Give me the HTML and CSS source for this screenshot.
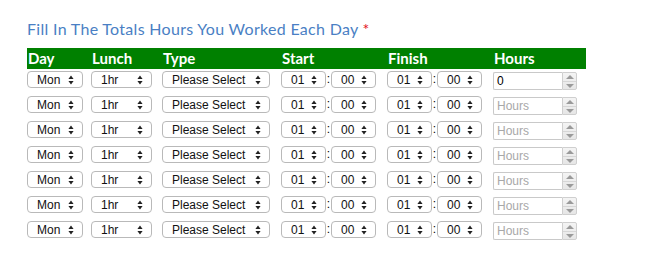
FILE: index.html
```html
<!DOCTYPE html>
<html lang="en">
<head>
<meta charset="UTF-8" />
<meta name="viewport" content="width=device-width, initial-scale=1" />
<title>Timesheet</title>
<link rel="stylesheet" href="styles.css">
</head>
<body>

<div class="hoja">
  <h3 class="titulo">Fill In The Totals Hours You Worked Each Day <span class="req">*</span></h3>

  <table class="horas">
    <thead>
      <tr>
        <th class="c-day">Day</th>
        <th class="c-lunch">Lunch</th>
        <th class="c-type">Type</th>
        <th class="c-start">Start</th>
        <th class="c-finish">Finish</th>
        <th class="c-hours">Hours</th>
      </tr>
    </thead>
    <tbody id="filas"></tbody>
  </table>
</div>

<script>
  const filas = document.getElementById('filas');

  // 7 filas iguales, solo la primera lleva valor en Hours
  for (let i = 0; i < 7; i++) {
    const tr = document.createElement('tr');
    tr.innerHTML = `
      <td><select class="sel s-day"><option>Mon</option><option>Tue</option><option>Wed</option><option>Thu</option><option>Fri</option><option>Sat</option><option>Sun</option></select></td>
      <td><select class="sel s-lunch"><option>1hr</option><option>30min</option><option>None</option></select></td>
      <td><select class="sel s-type"><option>Please Select</option><option>Normal</option><option>Overtime</option></select></td>
      <td><select class="sel s-time"><option>01</option></select><span class="dos">:</span><select class="sel s-time"><option>00</option></select></td>
      <td><select class="sel s-time"><option>01</option></select><span class="dos">:</span><select class="sel s-time"><option>00</option></select></td>
      <td><span class="num"><input type="text" placeholder="Hours" value="${i === 0 ? '0' : ''}" /><span class="spin"><i class="up"></i><i class="down"></i></span></span></td>
    `;
    filas.appendChild(tr);
  }
</script>

</body>
</html>
```

FILE: styles.css
```css
body { margin: 0; background: #fff; font-family: "Liberation Sans", Arial, sans-serif; }
.hoja { padding: 19px 0 0 27px; }

.titulo {
  margin: 0 0 9px 0;
  font-family: Lato, "Open Sans", sans-serif;
  font-weight: normal;
  font-size: 16px;
  line-height: 20px;
  letter-spacing: 0.3px;
  color: #4a7fc4;
}
.req { color: #e3101a; }

table.horas { border-collapse: collapse; width: 559px; }
.horas th {
  background: green;
  color: #fff;
  font-family: Lato, "Open Sans", sans-serif;
  font-weight: bold;
  font-size: 15px;
  text-align: left;
  height: 21px;
  padding: 0 0 0 1px;
  line-height: 21px;
}
.c-day { width: 63px; }
.c-lunch { width: 70px; }
.c-type { width: 118px; }
.c-start, .c-finish { width: 105px; }

.horas td { padding: 0; height: 25px; vertical-align: top; white-space: nowrap; }
.horas tbody tr:first-child td { padding-top: 2px; }

.sel {
  -webkit-appearance: none;
  appearance: none;
  box-sizing: border-box;
  height: 17px;
  margin: 0;
  padding: 0 0 0 9px;
  border: 1px solid #b9b9b9;
  border-radius: 4px;
  font-family: "Liberation Sans", Arial, sans-serif;
  font-size: 12px;
  color: #111;
  background: #fff url("data:image/svg+xml;utf8,<svg xmlns='http://www.w3.org/2000/svg' width='6' height='10'><path d='M3 0.5L5.6 4H0.4z M3 9.5L0.4 6H5.6z' fill='%23222'/></svg>") no-repeat right 8px center;
  vertical-align: top;
}
.s-day { width: 56px; }
.s-lunch { width: 61px; }
.s-type { width: 108px; }
.s-time { width: 45px; }
.dos { display: inline-block; width: 5px; font-size: 12px; line-height: 17px; text-align: center; vertical-align: top; }

.num { display: inline-flex; height: 18px; margin-top: -1px; }
.num input {
  box-sizing: border-box;
  width: 69px;
  height: 18px;
  margin: 0;
  padding: 0 3px;
  border: 1px solid #c9c9c9;
  border-right: 0;
  border-radius: 2px 0 0 2px;
  font-family: "Liberation Sans", Arial, sans-serif;
  font-size: 12px;
  color: #000;
  outline: none;
}
.num input::placeholder { color: #a8a8a8; }
.spin {
  box-sizing: border-box;
  width: 15px;
  height: 18px;
  border: 1px solid #cfcfcf;
  border-radius: 0 2px 2px 0;
  background: linear-gradient(#f4f4f4, #e6e6e6);
  display: flex;
  flex-direction: column;
}
.spin i { flex: 1; position: relative; }
.spin .up { border-bottom: 1px solid #d6d6d6; }
.spin i::after {
  content: "";
  position: absolute;
  left: 3px;
  border-left: 4px solid transparent;
  border-right: 4px solid transparent;
}
.spin .up::after { top: 2px; border-bottom: 4px solid #9a9a9a; }
.spin .down::after { top: 2px; border-top: 4px solid #9a9a9a; }
```
